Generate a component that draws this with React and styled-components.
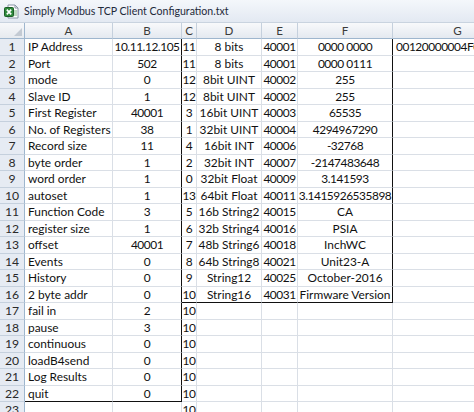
import React from 'react';
import styled, { createGlobalStyle } from 'styled-components';

const GlobalStyle = createGlobalStyle`
  html, body {
    margin: 0;
    padding: 0;
    background: #fff;
  }
  body {
    width: 474px;
    height: 412px;
    overflow: hidden;
    font-family: Lato, "Liberation Sans", sans-serif;
  }
`;

const COLUMNS = [
  { key: 'A', width: 88, align: 'left' },
  { key: 'B', width: 69, align: 'center' },
  { key: 'C', width: 15, align: 'center' },
  { key: 'D', width: 65, align: 'center' },
  { key: 'E', width: 36, align: 'center' },
  { key: 'F', width: 95, align: 'center' },
  { key: 'G', width: 130, align: 'left' },
];

const ROWS = [
  ['IP Address', '10.11.12.105', '11', '8 bits', '40001', '0000 0000', '00120000004F0100'],
  ['Port', '502', '11', '8 bits', '40001', '0000 0111'],
  ['mode', '0', '12', '8bit UINT', '40002', '255'],
  ['Slave ID', '1', '12', '8bit UINT', '40002', '255'],
  ['First Register', '40001', '3', '16bit UINT', '40003', '65535'],
  ['No. of Registers', '38', '1', '32bit UINT', '40004', '4294967290'],
  ['Record size', '11', '4', '16bit INT', '40006', '-32768'],
  ['byte order', '1', '2', '32bit INT', '40007', '-2147483648'],
  ['word order', '1', '0', '32bit Float', '40009', '3.141593'],
  ['autoset', '1', '13', '64bit Float', '40011', '3.1415926535898'],
  ['Function Code', '3', '5', '16b String2', '40015', 'CA'],
  ['register size', '1', '6', '32b String4', '40016', 'PSIA'],
  ['offset', '40001', '7', '48b String6', '40018', 'InchWC'],
  ['Events', '0', '8', '64b String8', '40021', 'Unit23-A'],
  ['History', '0', '9', 'String12', '40025', 'October-2016'],
  ['2 byte addr', '0', '10', 'String16', '40031', 'Firmware Version'],
  ['fail in', '2', '10'],
  ['pause', '3', '10'],
  ['continuous', '0', '10'],
  ['loadB4send', '0', '10'],
  ['Log Results', '0', '10'],
  ['quit', '0', '10'],
  ['', '', '10'],
];

const Window = styled.div`
  width: 474px;
  height: 412px;
  overflow: hidden;
  display: flex;
  flex-direction: column;
`;

const TitleBar = styled.div`
  height: 23px;
  flex: none;
  display: flex;
  align-items: center;
  gap: 5px;
  padding-left: 4px;
  background: linear-gradient(#f4f7fb, #e3e9f2);
  border-bottom: 1px solid #c9d3df;
  box-sizing: border-box;
  font-size: 10.6px;
  color: #1e2a3a;
`;

const Sheet = styled.div`
  display: grid;
  grid-template-columns: 25px ${COLUMNS.map((c) => `${c.width}px`).join(' ')};
  grid-template-rows: 16px;
  grid-auto-rows: 16.5px;
  font-size: 11.9px;
  color: #111;
`;

const Corner = styled.div`
  position: relative;
  background: linear-gradient(#f7f8fa, #e6eaef);
  border-right: 1px solid #9eb6ce;
  border-bottom: 1px solid #9eb6ce;
  box-sizing: border-box;

  &::after {
    content: '';
    position: absolute;
    right: 2px;
    bottom: 2px;
    border-style: solid;
    border-width: 0 0 8px 8px;
    border-color: transparent transparent #c3cad3 transparent;
  }
`;

const ColHeader = styled.div`
  display: flex;
  align-items: center;
  justify-content: center;
  background: linear-gradient(#f8f9fb, #e4e9f0);
  border-right: 1px solid #c5d0dd;
  border-bottom: 1px solid #9eb6ce;
  box-sizing: border-box;
  color: #3b3b3b;
  font-size: 11.6px;
`;

const RowHeader = styled.div`
  display: flex;
  align-items: center;
  justify-content: center;
  background: #e6ebf3;
  border-right: 1px solid #9eb6ce;
  border-bottom: 1px solid #c5d0dd;
  box-sizing: border-box;
  color: #2a2a2a;
  font-size: 12.2px;
`;

const Cell = styled.div`
  display: flex;
  align-items: center;
  justify-content: ${(p) => (p.$align === 'left' ? 'flex-start' : 'center')};
  padding: 0 ${(p) => (p.$align === 'left' ? '3px' : '0')};
  white-space: nowrap;
  letter-spacing: ${(p) => (p.$numeric ? '-0.45px' : '0')};
  overflow: ${(p) => (p.$spill ? 'visible' : 'hidden')};
  border-right: 1px solid ${(p) => (p.$darkRight ? '#111' : '#dadfe6')};
  border-bottom: 1px solid ${(p) => (p.$darkBottom ? '#111' : '#dadfe6')};
  box-sizing: border-box;
`;

const FileIcon = () => (
  <svg width="15" height="15" viewBox="0 0 15 15">
    <path d="M4 1h7l3 3v10H4z" fill="#fff" stroke="#8a96a6" />
    <path d="M11 1v3h3" fill="none" stroke="#8a96a6" />
    <rect x="0.5" y="3.5" width="9" height="9" rx="1" fill="#2f8a3c" stroke="#1c5e27" />
    <path d="M2.8 5.6l4.4 4.8M7.2 5.6l-4.4 4.8" stroke="#fff" strokeWidth="1.6" />
    <path d="M10 7h3M10 9h3M10 11h3" stroke="#7fb685" />
  </svg>
);

const edges = (rowNum, colIdx) => {
  const key = COLUMNS[colIdx].key;
  const darkRight = (key === 'B' && rowNum <= 22) || (key === 'F' && rowNum <= 16);
  const darkBottom =
    (rowNum === 22 && (key === 'A' || key === 'B')) ||
    (rowNum === 16 && ['C', 'D', 'E', 'F'].includes(key));
  return { darkRight, darkBottom };
};

const isNumeric = (text) => /^[-\d.\s]+$/.test(text) || /^[0-9A-F]{10,}$/.test(text);

export default function App() {
  return (
    <Window>
      <GlobalStyle />
      <TitleBar>
        <FileIcon />
        <span>Simply Modbus TCP Client Configuration.txt</span>
      </TitleBar>
      <Sheet>
        <Corner />
        {COLUMNS.map((c) => (
          <ColHeader key={c.key}>{c.key}</ColHeader>
        ))}
        {ROWS.map((row, r) => {
          const rowNum = r + 1;
          return (
            <React.Fragment key={rowNum}>
              <RowHeader>{rowNum}</RowHeader>
              {COLUMNS.map((c, i) => {
                const { darkRight, darkBottom } = edges(rowNum, i);
                const text = row[i] || '';
                return (
                  <Cell
                    key={c.key}
                    $align={c.align}
                    $spill={c.key === 'G'}
                    $numeric={text !== '' && isNumeric(text)}
                    $darkRight={darkRight}
                    $darkBottom={darkBottom}
                  >
                    {text}
                  </Cell>
                );
              })}
            </React.Fragment>
          );
        })}
      </Sheet>
    </Window>
  );
}
